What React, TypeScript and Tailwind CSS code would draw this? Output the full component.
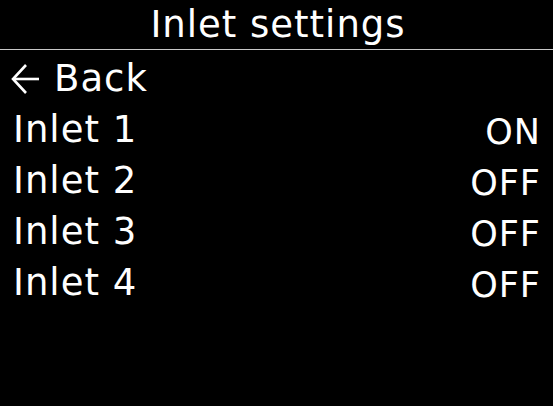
const inlets = [
  { name: 'Inlet 1', on: true },
  { name: 'Inlet 2', on: false },
  { name: 'Inlet 3', on: false },
  { name: 'Inlet 4', on: false },
];

function BackArrow() {
  return (
    <svg width="30" height="32" viewBox="0 0 30 32" fill="none" stroke="white" strokeWidth="2.6" strokeLinecap="butt">
      <path d="M28 16H2" />
      <path d="M15 2L2 16L15 30" />
    </svg>
  );
}

export default function App() {
  return (
    <div
      className="w-[553px] h-[406px] bg-black text-white overflow-hidden"
      style={{ fontFamily: '"DejaVu Sans", Verdana, sans-serif' }}
    >
      <div className="h-[50px] border-b border-[#c8c8c8] text-center text-[37px] leading-[49px] tracking-[1px] pl-[3px]">
        Inlet settings
      </div>
      <div className="pt-[3px] pl-[13px] pr-[13px]">
        <div className="h-[51px] flex items-center text-[37px] leading-[51px] tracking-[1px]">
          <span className="-ml-[2px] mr-[13px] flex">
            <BackArrow />
          </span>
          <span>Back</span>
        </div>
        {inlets.map((inlet) => (
          <div key={inlet.name} className="h-[51px] flex items-center justify-between leading-[51px] tracking-[1px]">
            <span className="text-[37px]">{inlet.name}</span>
            <span className="text-[35px] pt-[5px] -mr-[1px]">{inlet.on ? 'ON' : 'OFF'}</span>
          </div>
        ))}
      </div>
    </div>
  );
}
